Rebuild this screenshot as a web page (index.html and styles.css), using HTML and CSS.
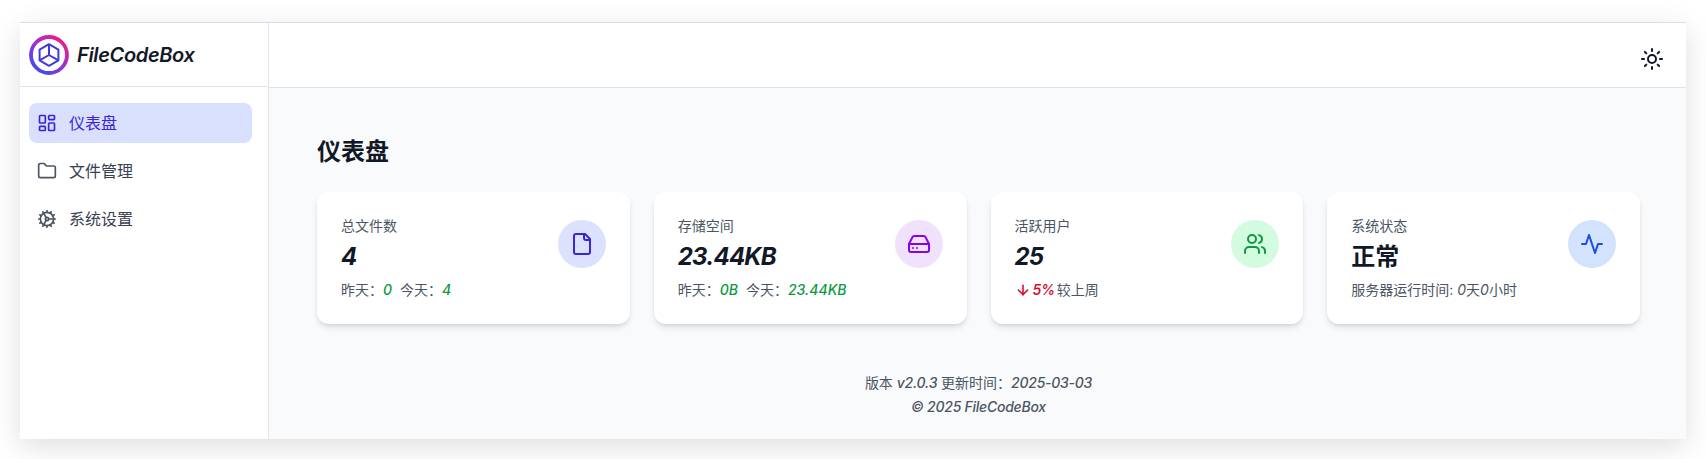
FILE: index.html
```html
<!DOCTYPE html>
<html lang="zh-CN">
<head>
    <meta charset="UTF-8">
    <meta name="viewport" content="width=device-width, initial-scale=1.0">
    <title>FileCodeBox</title>
    <link rel="stylesheet" href="styles.css">
</head>
<body>
    <div class="app">
        <aside class="sidebar">
            <div class="brand">
                <svg class="brand-logo" viewBox="0 0 40 40" fill="none">
                    <defs>
                        <linearGradient id="ring" x1="0.85" y1="0.05" x2="0.15" y2="0.95">
                            <stop offset="0" stop-color="#ec1f83"/>
                            <stop offset="0.5" stop-color="#9a2fd8"/>
                            <stop offset="1" stop-color="#3f4cf0"/>
                        </linearGradient>
                    </defs>
                    <circle cx="20" cy="20" r="18" stroke="url(#ring)" stroke-width="3.8"/>
                    <path d="M20 9.2 29.4 14.6v10.8L20 30.8l-9.4-5.4V14.6z" stroke="#4338e0" stroke-width="2" stroke-linejoin="round"/>
                    <path d="M20 9.7V20l9 5.2M20 20l-9 5.2" stroke="#4338e0" stroke-width="2"/>
                </svg>
                <span class="brand-name">FileCodeBox</span>
            </div>
            <nav class="nav">
                <a class="nav-item active" href="#">
                    <svg class="nav-icon" viewBox="0 0 24 24"><rect x="3" y="3" width="7" height="9" rx="1"/><rect x="14" y="3" width="7" height="5" rx="1"/><rect x="14" y="12" width="7" height="9" rx="1"/><rect x="3" y="16" width="7" height="5" rx="1"/></svg>
                    <span class="nav-text">仪表盘</span>
                </a>
                <a class="nav-item" href="#">
                    <svg class="nav-icon" viewBox="0 0 24 24"><path d="M20 20a2 2 0 0 0 2-2V8a2 2 0 0 0-2-2h-7.9a2 2 0 0 1-1.69-.9L9.6 3.9A2 2 0 0 0 7.93 3H4a2 2 0 0 0-2 2v13a2 2 0 0 0 2 2Z"/></svg>
                    <span class="nav-text">文件管理</span>
                </a>
                <a class="nav-item" href="#">
                    <svg class="nav-icon" viewBox="0 0 24 24"><path d="M12 20a8 8 0 1 0 0-16 8 8 0 0 0 0 16Z"/><path d="M12 14a2 2 0 1 0 0-4 2 2 0 0 0 0 4Z"/><path d="M12 2v2"/><path d="M12 22v-2"/><path d="m17 20.66-1-1.73"/><path d="M11 10.27 7 3.34"/><path d="m20.66 17-1.73-1"/><path d="m3.34 7 1.73 1"/><path d="M14 12h8"/><path d="M2 12h2"/><path d="m20.66 7-1.73 1"/><path d="m3.34 17 1.73-1"/><path d="m17 3.34-1 1.73"/><path d="m11 13.73-4 6.93"/></svg>
                    <span class="nav-text">系统设置</span>
                </a>
            </nav>
        </aside>

        <div class="content">
            <header class="topbar">
                <svg class="theme-icon" viewBox="0 0 24 24"><circle cx="12" cy="12" r="4"/><path d="M12 2v2"/><path d="M12 20v2"/><path d="m4.93 4.93 1.41 1.41"/><path d="m17.66 17.66 1.41 1.41"/><path d="M2 12h2"/><path d="M20 12h2"/><path d="m6.34 17.66-1.41 1.41"/><path d="m19.07 4.93-1.41 1.41"/></svg>
            </header>

            <main class="main">
                <h1 class="page-title">仪表盘</h1>
                <div class="cards">
                    <div class="card">
                        <div class="card-top">
                            <div>
                                <div class="card-label">总文件数</div>
                                <div class="card-value en">4</div>
                            </div>
                            <div class="card-icon indigo">
                                <svg viewBox="0 0 24 24"><path d="M15 2H6a2 2 0 0 0-2 2v16a2 2 0 0 0 2 2h12a2 2 0 0 0 2-2V7Z"/><path d="M14 2v4a2 2 0 0 0 2 2h4"/></svg>
                            </div>
                        </div>
                        <div class="card-sub">
                            <span>昨天：<b class="up en">0</b></span>
                            <span>今天：<b class="up en">4</b></span>
                        </div>
                    </div>

                    <div class="card">
                        <div class="card-top">
                            <div>
                                <div class="card-label">存储空间</div>
                                <div class="card-value en">23.44KB</div>
                            </div>
                            <div class="card-icon purple">
                                <svg viewBox="0 0 24 24"><line x1="22" y1="12" x2="2" y2="12"/><path d="M5.45 5.11 2 12v6a2 2 0 0 0 2 2h16a2 2 0 0 0 2-2v-6l-3.45-6.89A2 2 0 0 0 16.76 4H7.24a2 2 0 0 0-1.79 1.11z"/><line x1="6" y1="16" x2="6.01" y2="16"/><line x1="10" y1="16" x2="10.01" y2="16"/></svg>
                            </div>
                        </div>
                        <div class="card-sub">
                            <span>昨天：<b class="up en">0B</b></span>
                            <span>今天：<b class="up en">23.44KB</b></span>
                        </div>
                    </div>

                    <div class="card">
                        <div class="card-top">
                            <div>
                                <div class="card-label">活跃用户</div>
                                <div class="card-value en">25</div>
                            </div>
                            <div class="card-icon green">
                                <svg viewBox="0 0 24 24"><path d="M16 21v-2a4 4 0 0 0-4-4H6a4 4 0 0 0-4 4v2"/><circle cx="9" cy="7" r="4"/><path d="M22 21v-2a4 4 0 0 0-3-3.87"/><path d="M16 3.13a4 4 0 0 1 0 7.75"/></svg>
                            </div>
                        </div>
                        <div class="card-sub trend">
                            <svg class="trend-icon" viewBox="0 0 24 24"><path d="M12 5v14"/><path d="m19 12-7 7-7-7"/></svg>
                            <b class="down en">5%</b>
                            <span>较上周</span>
                        </div>
                    </div>

                    <div class="card">
                        <div class="card-top">
                            <div>
                                <div class="card-label">系统状态</div>
                                <div class="card-value">正常</div>
                            </div>
                            <div class="card-icon blue">
                                <svg viewBox="0 0 24 24"><path d="M22 12h-4l-3 9L9 3l-3 9H2"/></svg>
                            </div>
                        </div>
                        <div class="card-sub uptime">服务器运行时间: <span class="en">0</span>天<span class="en">0</span>小时</div>
                    </div>
                </div>

                <footer class="footer">
                    <div>版本 <span class="en">v2.0.3</span> 更新时间：<span class="en">2025-03-03</span></div>
                    <div class="en">© 2025 FileCodeBox</div>
                </footer>
            </main>
        </div>
    </div>
</body>
</html>
```

FILE: styles.css
```css
* {
    box-sizing: border-box;
}
html, body {
    height: 100%;
}
body {
    font-family: 'Inter', 'Noto Sans CJK SC', sans-serif;
    background-color: #ffffff;
    color: #111827;
    margin: 0;
    padding: 22px 20px 20px;
    overflow: hidden;
}
.en {
    font-style: italic;
}
.app {
    display: flex;
    height: 417px;
    background: #f9fafb;
    border-top: 1px solid #d8deee;
    box-shadow: 0 8px 28px rgba(0,0,0,0.13);
}

/* sidebar */
.sidebar {
    width: 249px;
    flex-shrink: 0;
    background: #fff;
    border-right: 1px solid #e0e3ea;
}
.brand {
    display: flex;
    align-items: center;
    height: 64px;
    padding-left: 9px;
    border-bottom: 1px solid #e0e3ea;
}
.brand-logo {
    width: 40px;
    height: 40px;
    margin-right: 8px;
}
.brand-name {
    font-size: 20px;
    font-weight: 600;
    font-style: italic;
    letter-spacing: -0.35px;
    color: #111827;
}
.nav {
    display: flex;
    flex-direction: column;
    gap: 8px;
    padding: 16px 16px 0 9px;
}
.nav-item {
    display: flex;
    align-items: center;
    height: 40px;
    padding-left: 8px;
    border-radius: 8px;
    font-size: 16px;
    color: #374151;
    text-decoration: none;
}
.nav-item.active {
    background: #d8e0fe;
    color: #3c24d8;
}
.nav-text {
    margin-bottom: 2px;
}
.nav-icon {
    width: 20px;
    height: 20px;
    margin-right: 12px;
    fill: none;
    stroke: currentColor;
    stroke-width: 2;
    stroke-linecap: round;
    stroke-linejoin: round;
}
.nav-item:not(.active) .nav-icon {
    stroke: #4b5563;
}

/* top bar */
.content {
    flex: 1;
    min-width: 0;
    display: flex;
    flex-direction: column;
}
.topbar {
    display: flex;
    align-items: center;
    justify-content: flex-end;
    height: 65px;
    padding: 8px 22px 0 0;
    background: #fff;
    border-bottom: 1px solid #e0e3ea;
}
.theme-icon {
    width: 24px;
    height: 24px;
    fill: none;
    stroke: #111827;
    stroke-width: 2;
    stroke-linecap: round;
    stroke-linejoin: round;
}

/* main */
.main {
    flex: 1;
    padding: 48px 46px 0 48px;
}
.page-title {
    margin: 0 0 24px;
    font-size: 24px;
    line-height: 32px;
    font-weight: 700;
    color: #111827;
}
.cards {
    display: grid;
    grid-template-columns: repeat(4, 1fr);
    gap: 24px;
}
.card {
    height: 132px;
    padding: 24px;
    background: #fff;
    border-radius: 12px;
    box-shadow: 0 4px 6px -1px rgba(0,0,0,0.12), 0 2px 4px -2px rgba(0,0,0,0.1);
}
.card-top {
    display: flex;
    align-items: center;
    justify-content: space-between;
}
.card-label {
    font-size: 14px;
    line-height: 20px;
    color: #4b5563;
}
.card-value {
    padding-top: 5px;
    font-size: 24px;
    line-height: 31px;
    font-weight: 700;
    color: #111827;
}
.card-value.en {
    letter-spacing: -0.8px;
}
.card-icon {
    display: flex;
    align-items: center;
    justify-content: center;
    width: 48px;
    height: 48px;
    border-radius: 50%;
}
.card-icon svg {
    width: 24px;
    height: 24px;
    fill: none;
    stroke: currentColor;
    stroke-width: 2;
    stroke-linecap: round;
    stroke-linejoin: round;
}
.indigo { background: #dbe1fe; color: #3c24d8; }
.purple { background: #f0e2fd; color: #8a00ee; }
.green { background: #d3fbe0; color: #0e9a40; }
.blue { background: #d3e3fd; color: #1c4ddb; }

.card-sub {
    display: flex;
    gap: 8px;
    margin-top: 8px;
    font-size: 14px;
    line-height: 20px;
    color: #4b5563;
}
.uptime {
    display: block;
}
.card-sub b {
    font-weight: 500;
}
.card-sub .up {
    color: #0e9a40;
}
.trend {
    align-items: center;
    gap: 2px;
}
.trend-icon {
    width: 16px;
    height: 16px;
    fill: none;
    stroke: #d8102f;
    stroke-width: 2.4;
    stroke-linecap: round;
    stroke-linejoin: round;
}
.card-sub .down {
    color: #d8102f;
    font-weight: 600;
    letter-spacing: -0.3px;
}

.footer {
    margin-top: 47px;
    text-align: center;
    font-size: 14px;
    line-height: 24px;
    color: #4b5563;
}
.footer .en, .footer div.en {
    font-weight: 500;
    letter-spacing: -0.25px;
}
```
